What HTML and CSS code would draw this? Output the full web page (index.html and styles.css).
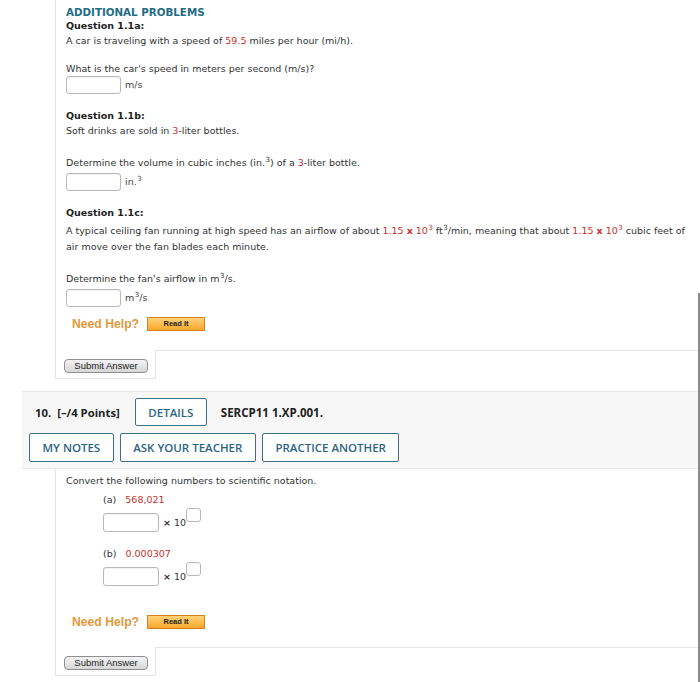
FILE: index.html
```html
<!DOCTYPE html>
<html>
<head>
<meta charset="utf-8">
<link rel="stylesheet" href="styles.css">
</head>
<body>
<div class="page">
  <div class="qbox q1">
    <div class="title">ADDITIONAL PROBLEMS</div>
    <div class="qlabel">Question 1.1a:</div>
    <div class="line">A car is traveling with a speed of <span class="red">59.5</span> miles per hour (mi/h).</div>
    <div class="line ask1">What is the car's speed in meters per second (m/s)?</div>
    <div class="ansrow"><span class="inp"></span><span class="unit">m/s</span></div>

    <div class="qlabel gap15">Question 1.1b:</div>
    <div class="line">Soft drinks are sold in <span class="red">3</span>-liter bottles.</div>
    <div class="line ask2">Determine the volume in cubic inches (in.<sup>3</sup>) of a <span class="red">3</span>-liter bottle.</div>
    <div class="ansrow r3"><span class="inp"></span><span class="unit">in.<sup>3</sup></span></div>

    <div class="qlabel gap15">Question 1.1c:</div>
    <div class="para">A typical ceiling fan running at high speed has an airflow of about <span class="red">1.15 <b>x</b> 10<sup>3</sup></span> ft<sup>3</sup>/min, meaning that about <span class="red">1.15 <b>x</b> 10<sup>3</sup></span> cubic feet of air move over the fan blades each minute.</div>
    <div class="line ask3">Determine the fan's airflow in m<sup>3</sup>/s.</div>
    <div class="ansrow r3"><span class="inp"></span><span class="unit">m<sup>3</sup>/s</span></div>

    <div class="help h1"><span class="needhelp">Need Help?</span><span class="readit">Read It</span></div>
  </div>
  <div class="tabrow">
    <div class="tab"><span class="submit">Submit Answer</span></div>
    <div class="filler"></div>
  </div>

  <div class="band">
    <div class="bandrow1">
      <span class="num">10.</span>
      <span class="pts">[–/4 Points]</span>
      <span class="btn details">DETAILS</span>
      <span class="code">SERCP11 1.XP.001.</span>
    </div>
    <div class="bandrow2">
      <span class="btn">MY NOTES</span>
      <span class="btn">ASK YOUR TEACHER</span>
      <span class="btn">PRACTICE ANOTHER</span>
    </div>
  </div>

  <div class="qbox q2">
    <div class="line">Convert the following numbers to scientific notation.</div>
    <div class="part">
      <div class="line plabel">(a) &nbsp; <span class="red">568,021</span></div>
      <div class="sci"><span class="inp"></span><span class="x10"><b>×</b> 10</span><span class="supbox"></span></div>
      <div class="line plabel pb">(b) &nbsp; <span class="red">0.000307</span></div>
      <div class="sci"><span class="inp"></span><span class="x10"><b>×</b> 10</span><span class="supbox"></span></div>
    </div>
    <div class="help h2"><span class="needhelp">Need Help?</span><span class="readit">Read It</span></div>
  </div>
  <div class="tabrow">
    <div class="tab"><span class="submit">Submit Answer</span></div>
    <div class="filler"></div>
  </div>
  <div class="scrollline"></div>
</div>
</body>
</html>
```

FILE: styles.css
```css
html, body {
  margin: 0;
  padding: 0;
  background: #ffffff;
}
body {
  font-family: "DejaVu Sans", Verdana, sans-serif;
  font-size: 9.5px;
  color: #333333;
}
.page {
  position: relative;
  width: 700px;
  height: 682px;
  overflow: hidden;
}
.qbox {
  margin-left: 55px;
  border-left: 1px solid #e4e4e4;
  padding-left: 10px;
}
.q1 {
  padding-top: 5px;
  padding-bottom: 19px;
}
.title {
  font-weight: bold;
  font-size: 10.3px;
  line-height: 14px;
  color: #1f6c87;
}
.qlabel {
  font-weight: bold;
  line-height: 14px;
  color: #222;
}
.gap15 { margin-top: 15px; }
.line {
  line-height: 15px;
}
.ask1 { margin-top: 14px; line-height: 14px; }
.ask2 { margin-top: 18px; line-height: 14px; }
.ask3 { margin-top: 17px; line-height: 14px; }
.para {
  line-height: 16px;
  margin-top: 3px;
  padding-right: 10px;
}
sup {
  font-size: 7px;
  line-height: 0;
  vertical-align: 4px;
  margin-left: 0.5px;
}
.red { color: #c8312e; }
.ansrow {
  display: flex;
  align-items: flex-start;
  height: 18px;
}
.r3 { margin-top: 3px; }
.inp {
  display: inline-block;
  width: 53px;
  height: 16px;
  border: 1px solid #b8b8b8;
  border-radius: 3px;
  background: #fff;
  box-shadow: inset 0 1px 1px rgba(0,0,0,0.06);
}
.unit {
  margin-left: 4px;
  line-height: 18px;
  color: #444;
}
.help {
  display: flex;
  align-items: center;
  height: 14px;
  margin-left: 6px;
}
.h1 { margin-top: 10px; }
.h2 { margin-top: 29px; }
.needhelp {
  font-family: "Liberation Sans", Arial, sans-serif;
  font-weight: bold;
  font-size: 12.2px;
  color: #e2983c;
}
.readit {
  margin-left: 8px;
  width: 56px;
  height: 12px;
  border: 1px solid #d9801f;
  background: linear-gradient(#ffd37a, #f7a82c);
  font-family: "Liberation Sans", Arial, sans-serif;
  font-weight: bold;
  font-size: 7.5px;
  line-height: 12px;
  text-align: center;
  color: #222;
}
.tabrow {
  display: flex;
  margin-left: 55px;
}
.tab {
  width: 101px;
  border-left: 1px solid #e4e4e4;
  border-right: 1px solid #e4e4e4;
  border-bottom: 1px solid #e4e4e4;
  padding-left: 8px;
  padding-top: 9px;
  box-sizing: border-box;
  height: 29px;
}
.filler {
  flex: 1;
  border-top: 1px solid #e4e4e4;
}
.submit {
  display: block;
  width: 82px;
  height: 12px;
  border: 1px solid #8f8f8f;
  border-radius: 4px;
  background: linear-gradient(#f4f4f4, #d6d6d6);
  font-family: "Liberation Sans", Arial, sans-serif;
  font-size: 9.5px;
  line-height: 12px;
  text-align: center;
  color: #222;
}
.band {
  margin-top: 12px;
  margin-left: 22px;
  background: #f7f7f7;
  border-top: 1px solid #e6e6e6;
  border-bottom: 1px solid #e6e6e6;
  padding: 6px 0 6px 7px;
  font-family: "Open Sans", sans-serif;
}
.bandrow1 {
  display: flex;
  align-items: center;
  height: 28px;
}
.num {
  margin-left: 6px;
  font-weight: bold;
  font-size: 11.3px;
  color: #222;
}
.pts {
  margin-left: 6px;
  font-weight: bold;
  font-size: 11.3px;
  color: #222;
}
.code {
  margin-left: 14px;
  font-weight: bold;
  font-size: 11.5px;
  color: #222;
}
.btn {
  display: inline-flex;
  align-items: center;
  justify-content: center;
  box-sizing: border-box;
  height: 29px;
  padding: 0 12.5px;
  border: 1px solid #3d6f87;
  border-radius: 2px;
  background: #fff;
  font-weight: 600;
  font-size: 11.5px;
  color: #2b6482;
}
.details {
  margin-left: 15px;
  height: 28px;
}
.bandrow2 {
  display: flex;
  gap: 6px;
  margin-top: 7px;
}
.q2 {
  padding-top: 5px;
  padding-bottom: 18px;
  line-height: 14px;
}
.q2 .line { line-height: 14px; }
.part {
  margin-left: 37px;
}
.plabel { margin-top: 5px; }
.pb { margin-top: 15px; }
.sci {
  display: flex;
  align-items: center;
  margin-top: 6px;
  height: 19px;
}
.sci .inp {
  width: 54px;
  height: 17px;
}
.x10 {
  margin-left: 4px;
  color: #333;
}
.supbox {
  align-self: flex-start;
  margin-top: -5px;
  width: 13px;
  height: 12px;
  border: 1px solid #b8b8b8;
  border-radius: 3px;
  background: #fff;
}
.scrollline {
  position: absolute;
  left: 698px;
  top: 293px;
  width: 2px;
  height: 389px;
  background: #8a8a8a;
}
```
